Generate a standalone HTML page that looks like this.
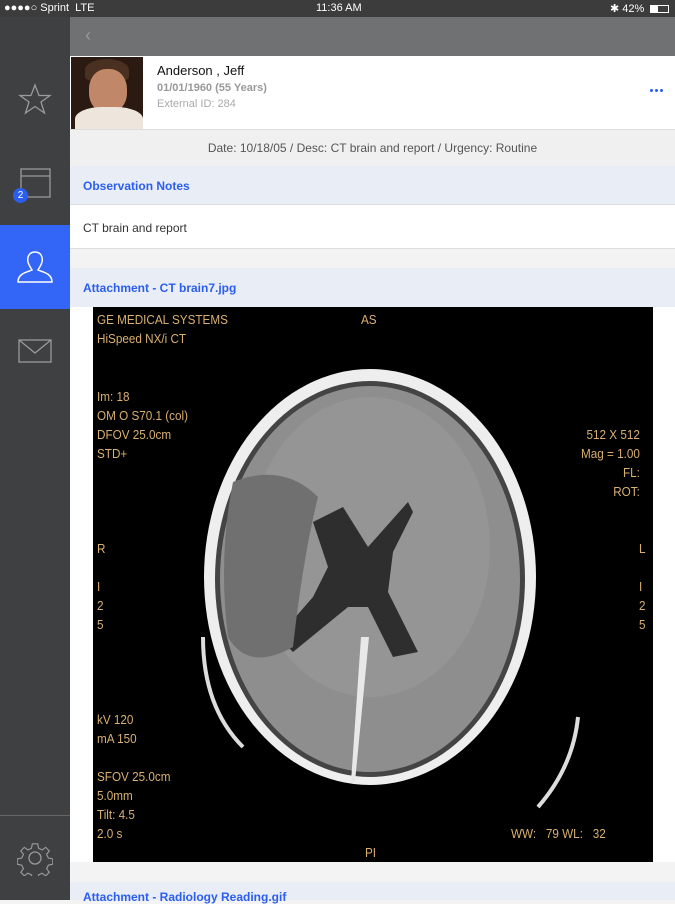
<!DOCTYPE html>
<html><head><style>
*{margin:0;padding:0;box-sizing:border-box}
body{width:675px;height:900px;overflow:hidden;background:#f3f3f4;font-family:"Liberation Sans",sans-serif;position:relative}
.abs{position:absolute}
.y{color:#d9b070;font-family:"Liberation Sans",sans-serif;font-size:13px;line-height:19px;position:absolute;transform:scaleX(.9);transform-origin:left top}
</style></head><body>
<div class="abs" style="left:0;top:0;width:675px;height:17px;background:#3c3c3d;color:#fff;font-size:11px">
<span class="abs" style="left:4px;top:2px">●●●●○ Sprint&nbsp;&nbsp;LTE</span>
<span class="abs" style="left:316px;top:2px">11:36 AM</span>
<span class="abs" style="left:610px;top:2px">✱ 42%</span>
<span class="abs" style="left:650px;top:5px;width:19px;height:8px;border:1px solid #fff"><span style="display:block;width:7px;height:6px;background:#fff"></span></span>
</div>
<div class="abs" style="left:0;top:17px;width:70px;height:883px;background:#3f4042"></div>
<svg class="abs" style="left:18px;top:83px" width="34" height="32"><polygon points="17,2 21,12.5 32,12.5 23,19 26.5,30 17,23.5 7.5,30 11,19 2,12.5 13,12.5" fill="none" stroke="#9a9a9a" stroke-width="1.3"/></svg>
<svg class="abs" style="left:20px;top:168px" width="32" height="30"><rect x="1" y="1" width="29" height="28" fill="none" stroke="#9a9a9a" stroke-width="1.3"/><line x1="1" y1="8" x2="30" y2="8" stroke="#9a9a9a" stroke-width="1.3"/></svg>
<div class="abs" style="left:13px;top:188px;width:15px;height:15px;border-radius:50%;background:#2b5ef0;color:#fff;font-size:10px;text-align:center;line-height:15px">2</div>
<div class="abs" style="left:0;top:225px;width:70px;height:84px;background:#3366f6"></div>
<svg class="abs" style="left:16px;top:250px" width="38" height="34"><path d="M19 2c-6 0-8 5-7 10 1 4 3 6 4 8-4 2-14 3-14 12h34c0-9-10-10-14-12 1-2 3-4 4-8 1-5-1-10-7-10z" fill="none" stroke="#fff" stroke-width="1.5"/></svg>
<svg class="abs" style="left:18px;top:339px" width="34" height="24"><rect x="1" y="1" width="32" height="22" fill="none" stroke="#9a9a9a" stroke-width="1.3"/><polyline points="1,1 17,14 33,1" fill="none" stroke="#9a9a9a" stroke-width="1.3"/></svg>
<div class="abs" style="left:0;top:815px;width:70px;height:1px;background:#666"></div>
<svg class="abs" style="left:17px;top:840px" width="36" height="36"><circle cx="18" cy="18" r="6" fill="none" stroke="#9a9a9a" stroke-width="1.3"/><path d="M15 2h6l1 5 4 2 4-3 4 4-3 4 2 4 5 1v6l-5 1-2 4 3 4-4 4-4-3-4 2-1 5h-6l-1-5-4-2-4 3-4-4 3-4-2-4-5-1v-6l5-1 2-4-3-4 4-4 4 3 4-2z" fill="none" stroke="#9a9a9a" stroke-width="1.3" transform="translate(2 2) scale(.89)"/></svg>

<div class="abs" style="left:70px;top:17px;width:605px;height:39px;background:#707173"><span class="abs" style="left:15px;top:8px;color:#999;font-size:18px">‹</span></div>
<div class="abs" style="left:70px;top:56px;width:605px;height:74px;background:#fff;border-bottom:1px solid #ddd"></div>
<div class="abs" style="left:71px;top:57px;width:72px;height:72px;background:#2a1a12;overflow:hidden">
<div class="abs" style="left:14px;top:2px;width:44px;height:22px;border-radius:50% 50% 20% 20%;background:#4a3020"></div>
<div class="abs" style="left:18px;top:12px;width:38px;height:44px;border-radius:45%;background:#c08868"></div>
<div class="abs" style="left:4px;top:50px;width:68px;height:30px;border-radius:40% 40% 0 0;background:#eee6dc"></div>
</div>
<div class="abs" style="left:157px;top:63px;font-size:13px;color:#111">Anderson , Jeff</div>
<div class="abs" style="left:157px;top:82px;font-size:11px;color:#999;font-weight:bold">01/01/1960 (55 Years)</div>
<div class="abs" style="left:157px;top:98px;font-size:11px;color:#aaa">External ID: 284</div>
<div class="abs" style="left:650px;top:89px;width:3px;height:3px;border-radius:50%;background:#2b5ef0;box-shadow:5px 0 #2b5ef0,10px 0 #2b5ef0"></div>
<div class="abs" style="left:70px;top:130px;width:605px;height:36px;background:#f0f0f0;text-align:center;font-size:12px;color:#555;line-height:36px">Date: 10/18/05 / Desc: CT brain and report / Urgency: Routine</div>
<div class="abs" style="left:70px;top:166px;width:605px;height:39px;background:#e9edf5;border-bottom:1px solid #ddd;padding:13px 13px;font-size:12px;color:#2b5ef0;font-weight:bold">Observation Notes</div>
<div class="abs" style="left:70px;top:205px;width:605px;height:44px;background:#fff;border-bottom:1px solid #ddd;padding:16px 13px;font-size:12px;color:#333">CT brain and report</div>
<div class="abs" style="left:70px;top:268px;width:605px;height:39px;background:#e9edf5;padding:13px 13px;font-size:12px;color:#2b5ef0;font-weight:bold">Attachment - CT brain7.jpg</div>
<div class="abs" style="left:70px;top:307px;width:605px;height:555px;background:#fff"></div>
<div class="abs" style="left:93px;top:307px;width:560px;height:555px;background:#000;overflow:hidden">
<svg class="abs" style="left:0;top:0" width="560" height="555">
<ellipse cx="277" cy="270" rx="166" ry="208" fill="#eee"/>
<ellipse cx="277" cy="272" rx="155" ry="198" fill="#444"/>
<ellipse cx="277" cy="272" rx="150" ry="193" fill="#8e8e8e"/>
<ellipse cx="277" cy="240" rx="120" ry="150" fill="#9a9a9a" opacity=".6"/>
<path d="M250 200 l25 40 40-45 5 10-20 40 -5 40 30 60 -25 5 -25-50 -20 0 -55 45 -15-15 35-40 15-30 -15-45z" fill="#2e2e2e"/>
<path d="M140 175 q50-20 85 15 q-15 60-25 150 q-45 25-65-10 q-10-80 5-155z" fill="#707070"/>
<path d="M268 330 l8 0 -14 145 -4 0z" fill="#e8e8e8"/>
<path d="M485 410 q-5 50-40 90" stroke="#ddd" stroke-width="4" fill="none"/>
<path d="M110 330 q0 70 40 110" stroke="#ddd" stroke-width="4" fill="none"/>
</svg>
<div class="y" style="left:4px;top:3px">GE MEDICAL SYSTEMS<br>HiSpeed NX/i CT</div>
<div class="y" style="left:268px;top:3px">AS</div>
<div class="y" style="left:4px;top:80px">Im: 18<br>OM O S70.1 (col)<br>DFOV 25.0cm<br>STD+</div>
<div class="y" style="left:488px;top:118px;text-align:right">512 X 512<br>Mag = 1.00<br>FL:<br>ROT:</div>
<div class="y" style="left:4px;top:232px">R<br><br>I<br>2<br>5</div>
<div class="y" style="left:546px;top:232px">L<br><br>I<br>2<br>5</div>
<div class="y" style="left:4px;top:403px">kV 120<br>mA 150<br><br>SFOV 25.0cm<br>5.0mm<br>Tilt: 4.5<br>2.0 s</div>
<div class="y" style="left:418px;top:517px">WW:&nbsp;&nbsp;&nbsp;79 WL:&nbsp;&nbsp;&nbsp;32</div>
<div class="y" style="left:272px;top:536px">PI</div>
</div>
<div class="abs" style="left:70px;top:882px;width:605px;height:18px;background:#e9edf5;padding:9px 13px;font-size:12px;color:#2b5ef0;font-weight:bold;line-height:12px">Attachment - Radiology Reading.gif</div>
</body></html>
